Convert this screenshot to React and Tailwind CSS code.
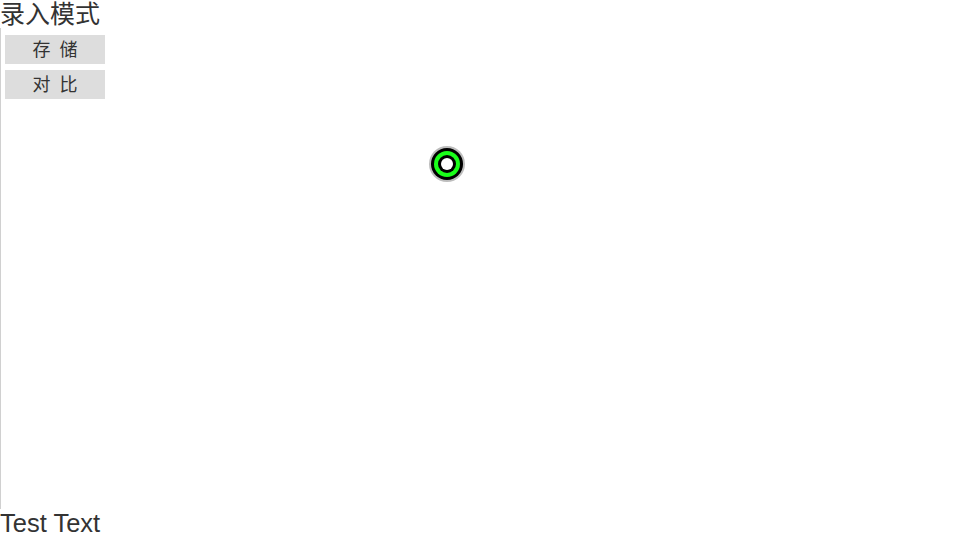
const font = { fontFamily: '"Liberation Sans", "Noto Sans CJK SC", sans-serif' };

const Target = () => (
  <div className="absolute left-[428px] top-[118px] flex h-9 w-9 items-center justify-center rounded-full bg-[#bdbdbd]">
    <div className="flex h-8 w-8 items-center justify-center rounded-full bg-black">
      <div className="flex h-[26px] w-[26px] items-center justify-center rounded-full bg-[#1aff1a]">
        <div className="flex h-[18px] w-[18px] items-center justify-center rounded-full bg-black">
          <div className="h-3 w-3 rounded-full bg-white" />
        </div>
      </div>
    </div>
  </div>
);

export default function App() {
  const buttons = ["存 储", "对 比"];

  return (
    <div
      className="flex h-screen w-full flex-col bg-white text-[#333]"
      style={font}
    >
      <div className="h-7 text-[25px] leading-7">录入模式</div>

      <div className="relative flex flex-1 flex-col gap-[6px] border-l border-[#d0d0d0] pt-[7px] pl-1">
        {buttons.map((label) => (
          <button
            key={label}
            className="h-[29px] w-[100px] bg-[#dddddd] pt-[2px] text-lg leading-[27px] text-[#333] [word-spacing:4px]"
          >
            {label}
          </button>
        ))}
        <Target />
      </div>

      <div className="h-7 text-[25.5px] leading-7">Test Text</div>
    </div>
  );
}
